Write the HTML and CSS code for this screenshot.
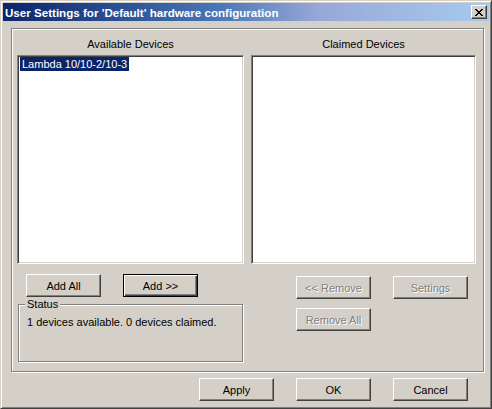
FILE: index.html
```html
<!DOCTYPE html>
<html>
<head>
<meta charset="utf-8">
<link rel="stylesheet" href="styles.css">
</head>
<body>
<div class="window">
  <div class="titlebar">
    <span class="title">User Settings for 'Default' hardware configuration</span>
    <button class="close" type="button" aria-label="Close">
      <svg width="8" height="7" viewBox="0 0 8 7" shape-rendering="crispEdges">
        <path fill="#000" d="M0 0h2v1H0zM6 0h2v1H6zM1 1h2v1H1zM5 1h2v1H5zM2 2h4v1H2zM3 3h2v1H3zM2 4h4v1H2zM1 5h2v1H1zM5 5h2v1H5zM0 6h2v1H0zM6 6h2v1H6z"/>
      </svg>
    </button>
  </div>
  <div class="content">
    <div class="frame">
      <div class="col col-left">
        <div class="label">Available Devices</div>
        <div class="listbox">
          <span class="item selected">Lambda 10/10-2/10-3</span>
        </div>
        <div class="btnrow">
          <button class="btn" type="button">Add All</button>
          <button class="btn default" type="button">Add &gt;&gt;</button>
        </div>
        <fieldset class="status">
          <legend>Status</legend>
          <div class="status-text">1 devices available. 0 devices claimed.</div>
        </fieldset>
      </div>
      <div class="col col-right">
        <div class="label">Claimed Devices</div>
        <div class="listbox"></div>
        <div class="btngrid">
          <button class="btn" type="button" disabled>&lt;&lt; Remove</button>
          <button class="btn" type="button" disabled>Settings</button>
          <button class="btn" type="button" disabled>Remove All</button>
        </div>
      </div>
    </div>
    <div class="footer">
      <button class="btn" type="button">Apply</button>
      <button class="btn" type="button">OK</button>
      <button class="btn" type="button">Cancel</button>
    </div>
  </div>
</div>
</body>
</html>
```
FILE: styles.css
```css
* { box-sizing: border-box; }
html, body { margin: 0; padding: 0; }
body {
  background: #d4d0c8;
  font-family: "Liberation Sans", Arial, sans-serif;
  font-size: 11px;
  color: #000;
  width: 492px;
  height: 409px;
  overflow: hidden;
}
.window {
  width: 492px;
  height: 409px;
  background: #d4d0c8;
  border: 1px solid;
  border-color: #d4d0c8 #404040 #404040 #d4d0c8;
  box-shadow: inset 1px 1px #fff, inset -1px -1px #808080;
  padding: 2px;
  display: flex;
  flex-direction: column;
}
.titlebar {
  height: 18px;
  flex: none;
  display: flex;
  align-items: center;
  padding: 0 2px 0 2px;
  background: linear-gradient(90deg, #0a246a 0%, #4a78b8 45%, #98a8d8 65%, #a6caf0 100%);
}
.title {
  color: #fff;
  font-weight: bold;
  font-size: 11.6px;
  white-space: nowrap;
  line-height: 13px;
}
.close {
  margin-left: auto;
  width: 16px;
  height: 14px;
  padding: 0 0 0 3px;
  background: #d4d0c8;
  border: 1px solid;
  border-color: #fff #404040 #404040 #fff;
  box-shadow: inset -1px -1px #808080, inset 1px 1px #d4d0c8;
  display: flex;
  align-items: center;
  justify-content: flex-start;
}
.close svg { display: block; }
.content {
  flex: 1;
  display: flex;
  flex-direction: column;
  padding: 7px 5px 5px 8px;
}
.frame {
  height: 344px;
  flex: none;
  border: 1px solid #808080;
  box-shadow: inset 1px 1px #fff, 1px 1px #fff;
  padding: 9px 7px 0 5px;
  display: flex;
  gap: 7px;
}
.col { display: flex; flex-direction: column; }
.col-left { width: 227px; }
.col-right { width: 225px; }
.label {
  text-align: center;
  line-height: 13px;
  margin-bottom: 4px;
}
.listbox {
  height: 209px;
  background: #fff;
  border: 1px solid;
  border-color: #808080 #fff #fff #808080;
  box-shadow: inset 1px 1px #404040, inset -1px -1px #d4d0c8;
  padding: 1px 2px 0 2px;
}
.item {
  display: inline-block;
  line-height: 14px;
  padding: 0 2px;
}
.item.selected {
  background: #0a246a;
  color: #fff;
}
.btn {
  width: 75px;
  height: 23px;
  padding: 0;
  margin: 0;
  font: inherit;
  color: #000;
  background: #d4d0c8;
  border: 1px solid;
  border-color: #fff #404040 #404040 #fff;
  box-shadow: inset -1px -1px #808080, inset 1px 1px #d4d0c8;
}
.btn.default {
  border-color: #000;
  box-shadow: inset 1px 1px #fff, inset -1px -1px #404040, inset -2px -2px #808080;
}
.btn:disabled {
  color: #808080;
  text-shadow: 1px 1px #fff;
}
.btnrow {
  display: flex;
  gap: 22px;
  margin-top: 10px;
  padding-left: 9px;
}
.status {
  margin: 1px 0 0 1px;
  width: 225px;
  border: 1px solid #808080;
  box-shadow: inset 1px 1px #fff, 1px 1px #fff;
  padding: 5px 6px 0 6px;
  min-inline-size: 0;
}
.status legend {
  padding: 0 2px;
  line-height: 13px;
  background: #d4d0c8;
}
.status-text {
  height: 45px;
  line-height: 13px;
  padding-left: 2px;
}
.btngrid {
  display: grid;
  grid-template-columns: 75px 75px;
  grid-template-rows: 23px 23px;
  column-gap: 22px;
  row-gap: 9px;
  margin-top: 12px;
  padding-left: 45px;
}
.footer {
  display: flex;
  justify-content: flex-end;
  gap: 22px;
  margin-top: 6px;
  padding-right: 16px;
}
```
